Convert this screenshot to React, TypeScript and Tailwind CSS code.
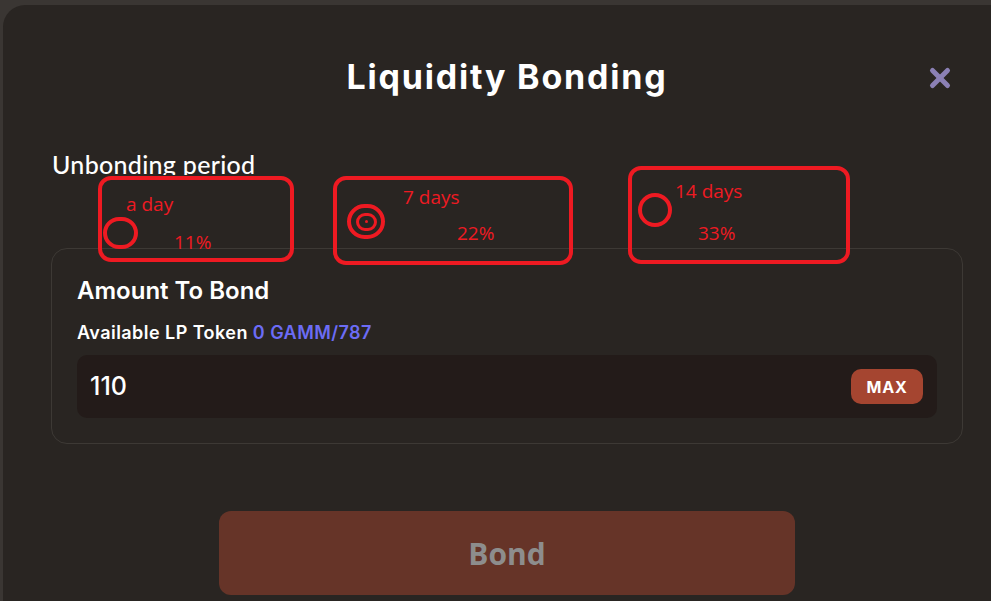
import React from "react";
import { X } from "lucide-react";

interface PeriodNote {
  label: string;
  rate: string;
  box: string;
  ring: string;
  labelPos: string;
  ratePos: string;
  selected?: boolean;
}

const notes: PeriodNote[] = [
  {
    label: "a day",
    rate: "11%",
    box: "left-[98px] top-[176px] w-[196px] h-[86px]",
    ring: "left-[103px] top-[217px] w-[35px] h-[32px]",
    labelPos: "left-[126px] top-[195px]",
    ratePos: "left-[174px] top-[233px]",
  },
  {
    label: "7 days",
    rate: "22%",
    box: "left-[333px] top-[176px] w-[240px] h-[89px]",
    ring: "left-[347px] top-[204px] w-[38px] h-[35px]",
    labelPos: "left-[403px] top-[188px]",
    ratePos: "left-[457px] top-[224px]",
    selected: true,
  },
  {
    label: "14 days",
    rate: "33%",
    box: "left-[628px] top-[166px] w-[222px] h-[98px]",
    ring: "left-[638px] top-[193px] w-[34px] h-[34px]",
    labelPos: "left-[675px] top-[182px]",
    ratePos: "left-[698px] top-[224px]",
  },
];

function Annotations() {
  return (
    <div className="absolute inset-0 pointer-events-none font-['Open_Sans',sans-serif] text-[19px] leading-[19px] text-[#ee1a22]">
      {notes.map((n) => (
        <React.Fragment key={n.label}>
          <div className={`absolute ${n.box} border-[4px] border-[#ee1a22] rounded-[13px]`} />
          <div
            className={`absolute ${n.ring} border-[4px] border-[#ee1a22] rounded-full flex items-center justify-center`}
          >
            {n.selected && (
              <div className="w-[21px] h-[18px] border-[3px] border-[#ee1a22] rounded-full flex items-center justify-center">
                <div className="w-[3px] h-[3px] bg-[#ee1a22] rounded-full" />
              </div>
            )}
          </div>
          <span className={`absolute ${n.labelPos}`}>{n.label}</span>
          <span className={`absolute ${n.ratePos}`}>{n.rate}</span>
        </React.Fragment>
      ))}
    </div>
  );
}

export default function App() {
  return (
    <div className="relative w-[991px] h-[601px] overflow-hidden bg-[#3a3633]">
      {/* Modal */}
      <div className="ml-[3px] mt-[5px] w-[1008px] h-[640px] rounded-tl-[22px] rounded-tr-[22px] bg-[#292522] px-[48px] pt-[52px] flex flex-col">
        {/* Header */}
        <div className="relative flex justify-center">
          <h2 className="font-['Inter',sans-serif] font-bold text-[34px] leading-[40px] text-white tracking-[1.8px]">
            Liquidity Bonding
          </h2>
          <button
            type="button"
            className="absolute right-[8px] top-[6px] text-[#8b80b5]"
          >
            <X className="w-[30px] h-[30px]" strokeWidth={4} />
          </button>
        </div>

        {/* Unbonding period */}
        <div className="mt-[53px] ml-[1px] h-[25px] overflow-hidden">
          <span className="font-['Lato',sans-serif] font-medium text-[25px] leading-[28px] text-white block tracking-[0.3px]">
            Unbonding period
          </span>
        </div>

        {/* Amount card */}
        <div className="mt-[73px] border border-[#3d3935] rounded-[16px] px-[25px] pt-[27px] pb-[25px] font-['Inter',sans-serif]">
          <h3 className="text-[24px] leading-[30px] font-semibold text-white">
            Amount To Bond
          </h3>
          <p className="mt-[14px] text-[18px] leading-[25px] font-semibold text-white tracking-[0.45px]">
            Available LP Token <span className="text-[#6c6cf5]">0 GAMM/787</span>
          </p>
          <div className="mt-[10px] h-[63px] rounded-[10px] bg-[#231b19] flex items-center justify-between pl-[13px] pr-[14px]">
            <span className="text-[25px] font-medium text-white">110</span>
            <button
              type="button"
              className="w-[72px] h-[35px] rounded-[10px] bg-[#a54530] text-white font-bold text-[16px] tracking-[0.8px]"
            >
              MAX
            </button>
          </div>
        </div>

        {/* Bond action */}
        <div className="mt-[67px] flex justify-center">
          <button
            type="button"
            className="w-[576px] h-[84px] rounded-[12px] bg-[#663428] text-[#8d8d8d] font-['Open_Sans',sans-serif] font-bold text-[30px]"
          >
            Bond
          </button>
        </div>
      </div>

      <Annotations />
    </div>
  );
}
